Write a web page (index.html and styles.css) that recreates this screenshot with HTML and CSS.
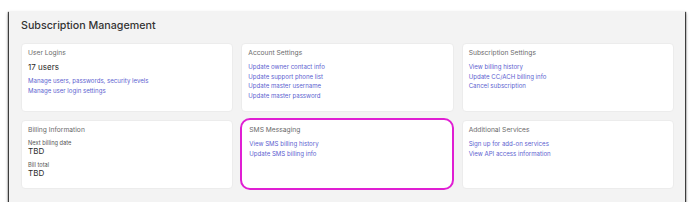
FILE: index.html
```html
<!DOCTYPE html>
<html>
<head>
<meta charset="utf-8">
<link rel="stylesheet" href="styles.css">
</head>
<body>
<div class="panel">
  <h1 class="title">Subscription Management</h1>
  <div class="grid">
    <div class="card">
      <div class="card-title">User Logins</div>
      <div class="big">17 users</div>
      <a class="link" href="#">Manage users, passwords, security levels</a>
      <a class="link" href="#">Manage user login settings</a>
    </div>
    <div class="card">
      <div class="card-title">Account Settings</div>
      <a class="link" href="#">Update owner contact info</a>
      <a class="link" href="#">Update support phone list</a>
      <a class="link" href="#">Update master username</a>
      <a class="link" href="#">Update master password</a>
    </div>
    <div class="card">
      <div class="card-title">Subscription Settings</div>
      <a class="link" href="#">View billing history</a>
      <a class="link" href="#">Update CC/ACH billing info</a>
      <a class="link" href="#">Cancel subscription</a>
    </div>
    <div class="card">
      <div class="card-title">Billing Information</div>
      <div class="label">Next billing date</div>
      <div class="value">TBD</div>
      <div class="label gap">Bill total</div>
      <div class="value">TBD</div>
    </div>
    <div class="card highlight">
      <div class="card-title">SMS Messaging</div>
      <a class="link" href="#">View SMS billing history</a>
      <a class="link" href="#">Update SMS billing info</a>
    </div>
    <div class="card">
      <div class="card-title">Additional Services</div>
      <a class="link" href="#">Sign up for add-on services</a>
      <a class="link" href="#">View API access information</a>
    </div>
  </div>
</div>
</body>
</html>
```
FILE: styles.css
```css
html, body {
  margin: 0;
  padding: 0;
  background: #ffffff;
}
body {
  font-family: Inter, "Noto Sans", sans-serif;
  padding: 11px 0 0 9px;
}
.panel {
  width: 676px;
  height: 191px;
  box-sizing: border-box;
  background: #f3f3f3;
  padding: 0 11px 0 12px;
  box-shadow: 0 2px 1px 1px rgba(0, 0, 0, 0.7), 0 3px 3px 1px rgba(0, 0, 0, 0.35);
}
.title {
  margin: 0 0 2px 0;
  font-size: 10.7px;
  line-height: 30px;
  font-weight: 500;
  color: #333333;
}
.grid {
  display: grid;
  grid-template-columns: repeat(3, 1fr);
  grid-auto-rows: 69px;
  gap: 8px;
}
.card {
  background: #ffffff;
  border-radius: 4px;
  border: 1px solid #ececec;
  padding: 5px 6px 0 6px;
  display: flex;
  flex-direction: column;
  align-items: flex-start;
}
.card.highlight {
  border: 2px solid #e01ed3;
  border-radius: 10px;
  margin: -2px 0 -1px -1px;
  padding: 6px 6px 0 7px;
}
.card-title {
  font-size: 6.7px;
  line-height: 9px;
  color: #6b6b6b;
  margin-bottom: 4px;
}
.big {
  font-size: 8px;
  line-height: 10px;
  color: #2a2a2a;
  margin-bottom: 4px;
}
.link {
  font-size: 6.1px;
  line-height: 9.7px;
  color: #5d62d0;
  text-decoration: none;
}
.label {
  font-size: 5.7px;
  line-height: 8px;
  color: #555555;
}
.label.gap {
  margin-top: 5px;
}
.value {
  font-size: 8px;
  line-height: 9px;
  color: #2a2a2a;
}
```
